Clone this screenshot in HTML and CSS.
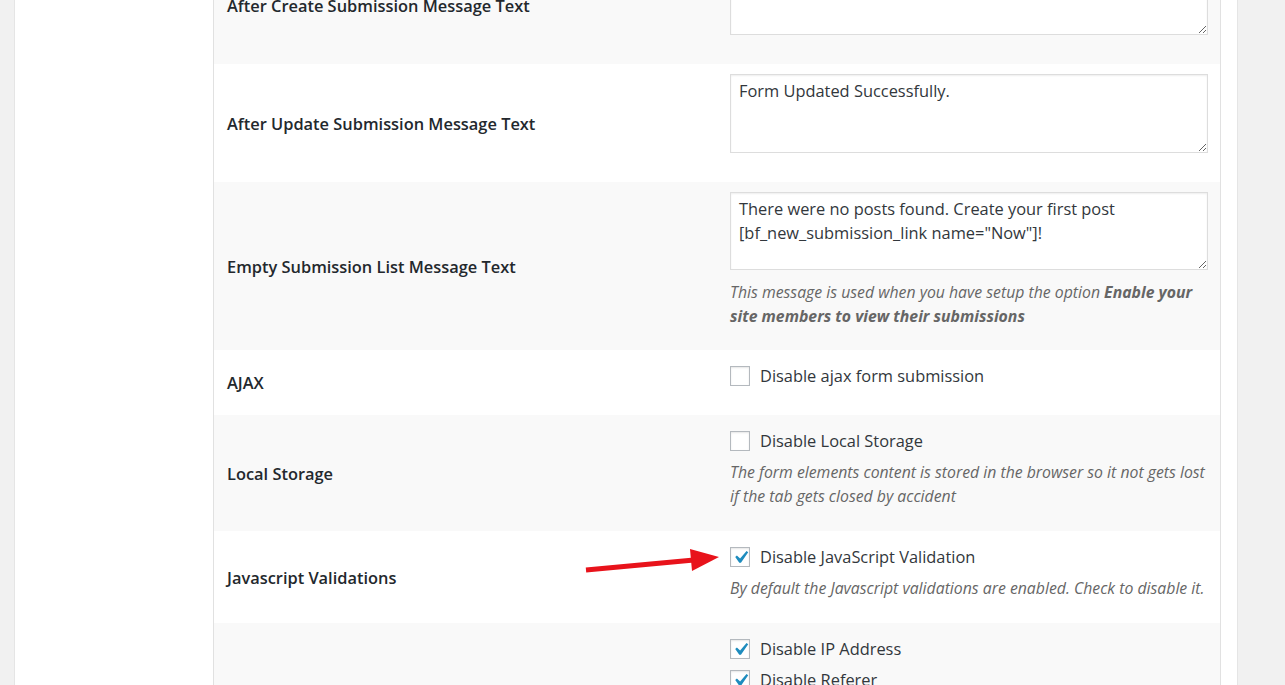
FILE: index.html
```html
<!DOCTYPE html>
<html lang="en">
<head>
    <meta charset="UTF-8">
    <title>Form Settings</title>
    <link rel="stylesheet" href="styles.css">
</head>
<body>
    <div class="wrap">
        <div class="side"></div>
        <div class="form-table">
            <div class="row alt">
                <div class="th">After Create Submission Message Text</div>
                <div class="td">
                    <textarea class="msg" rows="3"></textarea>
                </div>
            </div>
            <div class="row">
                <div class="th">After Update Submission Message Text</div>
                <div class="td">
                    <textarea class="msg" rows="3">Form Updated Successfully.</textarea>
                </div>
            </div>
            <div class="row alt">
                <div class="th">Empty Submission List Message Text</div>
                <div class="td">
                    <textarea class="msg short" rows="3">There were no posts found. Create your first post [bf_new_submission_link name="Now"]!</textarea>
                    <p class="description">This message is used when you have setup the option <b>Enable your site members to view their submissions</b></p>
                </div>
            </div>
            <div class="row">
                <div class="th">AJAX</div>
                <div class="td checks single">
                    <label class="check"><span class="box"></span>Disable ajax form submission</label>
                </div>
            </div>
            <div class="row alt">
                <div class="th">Local Storage</div>
                <div class="td checks">
                    <label class="check"><span class="box"></span>Disable Local Storage</label>
                    <p class="description">The form elements content is stored in the browser so it not gets lost if the tab gets closed by accident</p>
                </div>
            </div>
            <div class="row">
                <div class="th">Javascript Validations</div>
                <div class="td checks">
                    <label class="check"><span class="box checked"><svg viewBox="0 0 20 20"><path d="M14.83 4.89l1.34.94-5.81 8.38H9.02L5.78 9.67l1.34-1.25 2.57 2.4z"/></svg></span>Disable JavaScript Validation</label>
                    <p class="description">By default the Javascript validations are enabled. Check to disable it.</p>
                </div>
            </div>
            <div class="row alt">
                <div class="th"></div>
                <div class="td checks stack">
                    <label class="check"><span class="box checked"><svg viewBox="0 0 20 20"><path d="M14.83 4.89l1.34.94-5.81 8.38H9.02L5.78 9.67l1.34-1.25 2.57 2.4z"/></svg></span>Disable IP Address</label>
                    <label class="check"><span class="box checked"><svg viewBox="0 0 20 20"><path d="M14.83 4.89l1.34.94-5.81 8.38H9.02L5.78 9.67l1.34-1.25 2.57 2.4z"/></svg></span>Disable Referer</label>
                </div>
            </div>
        </div>
        <div class="gutter"></div>

        <!-- annotation arrow -->
        <svg class="arrow" width="150" height="40" viewBox="0 0 150 40">
            <line x1="4" y1="25" x2="112" y2="15" stroke="#e8131b" stroke-width="5"/>
            <polygon points="108,4 110,26 137,12" fill="#e8131b"/>
        </svg>
    </div>
</body>
</html>
```

FILE: styles.css
```css
html, body {
    margin: 0;
    padding: 0;
    height: 100%;
    overflow: hidden;
}
body {
    background: #f1f1f1;
    font-family: "Open Sans", sans-serif;
    color: #23282d;
}
.wrap {
    position: relative;
    margin-left: 14px;
    width: 1222px;
    min-height: 100%;
    background: #fff;
    border-left: 1px solid #e5e5e5;
    border-right: 1px solid #e5e5e5;
    display: grid;
    grid-template-columns: 198px 1008px 16px;
    align-items: start;
}
.form-table {
    margin-top: -54px;
    border-left: 1px solid #e1e1e1;
    border-right: 1px solid #e1e1e1;
    min-height: 800px;
    background: #f9f9f9;
}
.row {
    display: grid;
    grid-template-columns: 504px 1fr;
    background: #fff;
}
.row.alt {
    background: #f9f9f9;
}
.th {
    display: flex;
    align-items: center;
    padding-left: 13px;
    font-size: 16.4px;
    font-weight: 600;
    color: #23282d;
}
.td {
    padding: 10px 12px 22px;
}
.msg {
    display: block;
    box-sizing: border-box;
    width: 478px;
    height: 79px;
    margin: 0 0 7px;
    padding: 4px 8px;
    border: 1px solid #ddd;
    box-shadow: inset 0 1px 2px rgba(0, 0, 0, 0.07);
    font-family: "Open Sans", sans-serif;
    font-size: 16.4px;
    line-height: 24px;
    color: #32373c;
    resize: vertical;
    outline: none;
}
.msg.short {
    height: 78px;
    margin-bottom: 0;
}
.description {
    margin: 10px 0 0;
    font-size: 15.8px;
    font-style: italic;
    line-height: 24px;
    color: #666;
}
.td.checks {
    padding-top: 14px;
    padding-bottom: 23px;
}
.td.checks .description {
    margin-top: 7px;
}
.td.single {
    padding-bottom: 27px;
}
.td.stack {
    display: flex;
    flex-direction: column;
    gap: 7px;
}
.check {
    display: flex;
    align-items: center;
    gap: 10px;
    font-size: 16.4px;
    line-height: 24px;
    color: #32373c;
}
.box {
    box-sizing: border-box;
    width: 20px;
    height: 20px;
    border: 1px solid #b4b9be;
    background: #fff;
    box-shadow: inset 0 1px 2px rgba(0, 0, 0, 0.1);
    display: flex;
    align-items: center;
    justify-content: center;
}
.box svg {
    width: 25px;
    height: 25px;
    flex-shrink: 0;
    fill: #1e8cbe;
}
.arrow {
    position: absolute;
    left: 567px;
    top: 545px;
}
```
